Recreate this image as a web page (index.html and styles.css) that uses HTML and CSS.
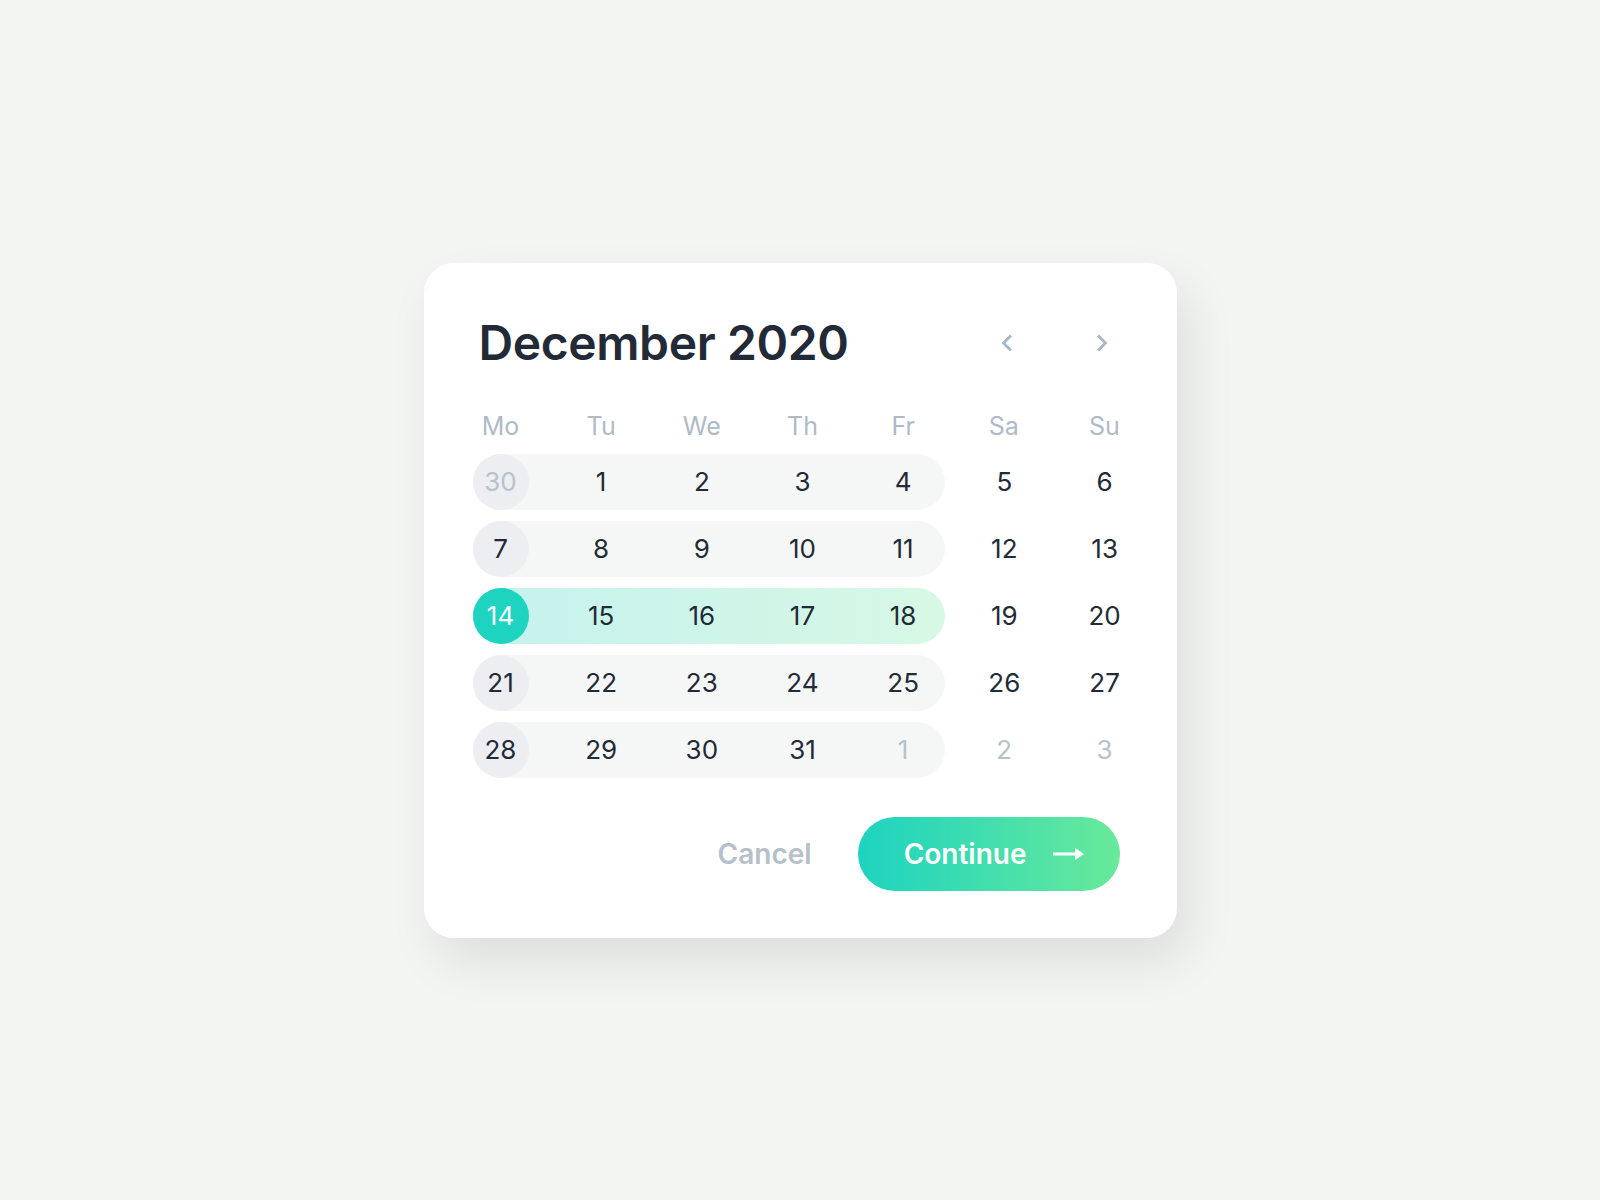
FILE: index.html
```html
<!DOCTYPE html>
<html lang="en">
<head>
    <meta charset="UTF-8">
    <meta name="viewport" content="width=device-width, initial-scale=1.0">
    <title>Date Picker</title>
    <link rel="stylesheet" href="styles.css">
</head>
<body>
    <div class="picker">
        <!-- Month title and navigation -->
        <div class="picker-header">
            <h1 class="month-title">December 2020</h1>
            <div class="nav">
                <button class="nav-btn" aria-label="Previous month">
                    <svg width="14" height="18" viewBox="0 0 14 18"><polyline points="11,1.5 3.5,9 11,16.5" /></svg>
                </button>
                <button class="nav-btn" aria-label="Next month">
                    <svg width="14" height="18" viewBox="0 0 14 18"><polyline points="3,1.5 10.5,9 3,16.5" /></svg>
                </button>
            </div>
        </div>

        <div class="days">
            <div class="weekdays">
                <span>Mo</span><span>Tu</span><span>We</span><span>Th</span><span>Fr</span><span>Sa</span><span>Su</span>
            </div>

            <div class="week">
                <div class="workweek">
                    <span class="day muted">30</span><span class="day">1</span><span class="day">2</span><span class="day">3</span><span class="day">4</span>
                </div>
                <span class="day">5</span><span class="day">6</span>
            </div>

            <div class="week">
                <div class="workweek">
                    <span class="day">7</span><span class="day">8</span><span class="day">9</span><span class="day">10</span><span class="day">11</span>
                </div>
                <span class="day">12</span><span class="day">13</span>
            </div>

            <div class="week">
                <div class="workweek selected">
                    <span class="day">14</span><span class="day">15</span><span class="day">16</span><span class="day">17</span><span class="day">18</span>
                </div>
                <span class="day">19</span><span class="day">20</span>
            </div>

            <div class="week">
                <div class="workweek">
                    <span class="day">21</span><span class="day">22</span><span class="day">23</span><span class="day">24</span><span class="day">25</span>
                </div>
                <span class="day">26</span><span class="day">27</span>
            </div>

            <div class="week">
                <div class="workweek">
                    <span class="day">28</span><span class="day">29</span><span class="day">30</span><span class="day">31</span><span class="day muted">1</span>
                </div>
                <span class="day muted">2</span><span class="day muted">3</span>
            </div>
        </div>

        <div class="picker-footer">
            <button class="btn-cancel">Cancel</button>
            <button class="btn-continue">
                Continue
                <svg width="31" height="12" viewBox="0 0 31 12"><rect x="0" y="4.5" width="24" height="3" /><polygon points="22,0 31,6 22,12" /></svg>
            </button>
        </div>
    </div>
</body>
</html>
```

FILE: styles.css
```css
* {
    box-sizing: border-box;
}
body {
    margin: 0;
    min-height: 100vh;
    display: flex;
    align-items: center;
    justify-content: center;
    background: #f3f5f3;
    font-family: Inter, "Noto Sans", sans-serif;
    color: #232a37;
}
button {
    font-family: inherit;
    border: none;
    background: none;
    padding: 0;
    cursor: pointer;
}
.picker {
    width: 753px;
    padding: 50px 57px 47px;
    background: #fff;
    border-radius: 30px;
    box-shadow: 12px 24px 50px rgba(0,0,0,0.09);
}
.picker-header {
    height: 60px;
    display: flex;
    align-items: center;
    justify-content: space-between;
}
.month-title {
    margin: 0 0 0 -2px;
    font-size: 48px;
    font-weight: 600;
    line-height: 60px;
    letter-spacing: -0.4px;
}
.nav {
    display: flex;
    gap: 59px;
}
.nav-btn {
    width: 36px;
    height: 36px;
    display: flex;
    align-items: center;
    justify-content: center;
}
.nav-btn svg polyline {
    fill: none;
    stroke: #a9b6c3;
    stroke-width: 2.8;
}
.days {
    margin: 38px -13px 0 -8px;
}
.weekdays {
    display: grid;
    grid-template-columns: repeat(7, 56px);
    justify-content: space-between;
    height: 30px;
    margin-bottom: 13px;
    font-size: 25px;
    line-height: 30px;
    color: #aebbc7;
    text-align: center;
}
.week {
    display: flex;
    align-items: center;
    gap: 44.67px;
    margin-bottom: 11px;
}
.week:last-child {
    margin-bottom: 0;
}
.workweek {
    display: flex;
    gap: 44.67px;
    padding-right: 14.33px;
    margin-right: -13.67px;
    border-radius: 28px;
    background: #f5f7f7;
}
.day {
    width: 56px;
    height: 56px;
    display: flex;
    align-items: center;
    justify-content: center;
    border-radius: 50%;
    font-size: 26px;
}
.workweek .day:first-child {
    background: #eceef1;
}
.day.muted {
    color: #b6c2cd;
}
.workweek.selected {
    background: linear-gradient(90deg, #c5f2ee, #d7f8e4);
}
.workweek.selected .day:first-child {
    background: #1fd3c1;
    color: #fff;
}
.picker-footer {
    display: flex;
    justify-content: flex-end;
    align-items: center;
    gap: 46px;
    margin-top: 39px;
}
.btn-cancel {
    font-size: 28px;
    font-weight: 600;
    color: #b6c0ca;
}
.btn-continue {
    display: flex;
    align-items: center;
    gap: 26px;
    height: 74px;
    padding: 0 36px 0 46px;
    border-radius: 37px;
    background: linear-gradient(90deg, #1dd3c0, #69e99a);
    color: #fff;
    font-size: 28px;
    font-weight: 600;
}
.btn-continue svg {
    fill: #fff;
}
```
